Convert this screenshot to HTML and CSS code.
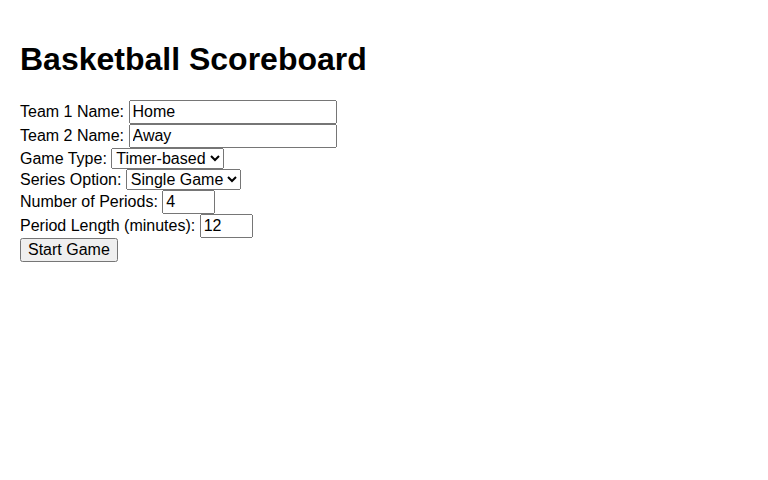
FILE: index.html
```html
<!DOCTYPE html>
<html>
<head>
<meta charset="utf-8">
<link rel="stylesheet" href="styles.css">
</head>
<body>
<div class="page">
  <h1 class="title">Basketball Scoreboard</h1>
  <div class="row"><label for="t1">Team 1 Name:</label> <input id="t1" class="text" type="text" value="Home"></div>
  <div class="row"><label for="t2">Team 2 Name:</label> <input id="t2" class="text" type="text" value="Away"></div>
  <div class="row"><label for="gt">Game Type:</label> <select id="gt"><option>Timer-based</option><option>Score-based</option></select></div>
  <div class="row"><label for="so">Series Option:</label> <select id="so"><option>Single Game</option><option>Best of 3</option></select></div>
  <div class="row"><label for="np">Number of Periods:</label> <input id="np" class="num" type="number" value="4"></div>
  <div class="row"><label for="pl">Period Length (minutes):</label> <input id="pl" class="num" type="number" value="12"></div>
  <div class="row"><button class="start">Start Game</button></div>
</div>
</body>
</html>
```
FILE: styles.css
```css
html, body {
  margin: 0;
  background: #fff;
}
.page {
  padding: 20px;
  font-family: "Liberation Sans", Arial, sans-serif;
  font-size: 16px;
  color: #000;
}
.title {
  font-size: 32px;
  margin: 21.44px 0;
}
input, select, button {
  font-family: inherit;
  font-size: 16px;
}
.text {
  width: 200px;
}
.num {
  width: 45px;
}
```
